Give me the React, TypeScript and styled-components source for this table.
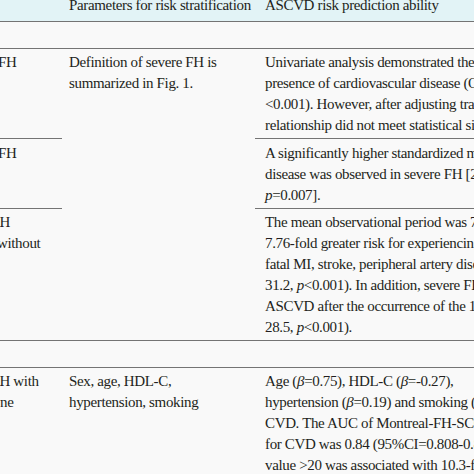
import React from 'react'
import styled, { createGlobalStyle } from 'styled-components'

const GlobalStyle = createGlobalStyle`
  html, body {
    margin: 0;
    padding: 0;
    overflow: hidden;
    background: #f9f9f9;
  }
  body {
    width: 474px;
    height: 474px;
  }
`

const rule = '1px solid #747474'

const Table = styled.div`
  display: grid;
  grid-template-columns: 62px 193px 330px;
  width: 585px;
  margin-top: -9px;
  font-family: 'Liberation Serif', 'Times New Roman', serif;
  font-size: 15px;
  line-height: 21px;
  letter-spacing: -0.35px;
  color: #231f20;
`

const HeadCell = styled.div<{ $pad: number }>`
  background: #e2f3f6;
  padding: 4px 0 5px ${({ $pad }) => $pad}px;
  border-bottom: ${rule};
  white-space: nowrap;
`

const SectionRow = styled.div`
  grid-column: 1 / -1;
  height: 25.5px;
  border-bottom: ${rule};
`

const Cell = styled.div<{ $pad: number; $rows?: number }>`
  grid-row: span ${({ $rows }) => $rows ?? 1};
  padding: 3.5px 0 2px ${({ $pad }) => $pad}px;
  border-bottom: ${rule};
  white-space: nowrap;
  overflow: hidden;
`

const Line = styled.div<{ $shift?: number }>`
  margin-left: ${({ $shift }) => $shift ?? 0}px;
`

const Var = styled.i`
  font-style: italic;
`

type StubLine = [text: string, shift: number]

const Stub = ({ lines }: { lines: StubLine[] }) => (
  <Cell $pad={0}>
    {lines.map(([text, shift]) => (
      <Line $shift={shift} key={text}>
        {text}
      </Line>
    ))}
  </Cell>
)

const Text = ({
  lines,
  pad,
  rows,
}: {
  lines: React.ReactNode[]
  pad: number
  rows?: number
}) => (
  <Cell $pad={pad} $rows={rows}>
    {lines.map((line, i) => (
      <Line key={i}>{line}</Line>
    ))}
  </Cell>
)

const p = <Var>p</Var>
const beta = <Var>β</Var>

export default function App() {
  return (
    <>
      <GlobalStyle />
      <Table role="table">
        <HeadCell $pad={0} />
        <HeadCell $pad={7}>Parameters for risk stratification</HeadCell>
        <HeadCell $pad={10}>ASCVD risk prediction ability</HeadCell>

        <SectionRow />

        <Stub lines={[['FH', -2]]} />
        <Text
          pad={7}
          rows={3}
          lines={['Definition of severe FH is', 'summarized in Fig. 1.']}
        />
        <Text
          pad={10}
          lines={[
            'Univariate analysis demonstrated the association with the',
            'presence of cardiovascular disease (OR=1.9, p=0.02, 95%CI',
            '<0.001). However, after adjusting traditional risk factors, the',
            'relationship did not meet statistical significance.',
          ]}
        />

        <Stub lines={[['FH', -2]]} />
        <Text
          pad={10}
          lines={[
            'A significantly higher standardized mortality ratio for coronary',
            'disease was observed in severe FH [22.5 (95%CI=1.2-31.7),',
            <>{p}=0.007].</>,
          ]}
        />

        <Stub
          lines={[
            ['FH', -8.5],
            ['without', -3],
          ]}
        />
        <Text
          pad={10}
          lines={[
            'The mean observational period was 7.3 years. Severe FH had a',
            '7.76-fold greater risk for experiencing ASCVD (CHD death, non-',
            'fatal MI, stroke, peripheral artery disease) (95%CI=1.93-',
            <>31.2, {p}&lt;0.001). In addition, severe FH had a higher risk of</>,
            'ASCVD after the occurrence of the 1st event (HR=9.42, 95%CI=3.1-',
            <>28.5, {p}&lt;0.001).</>,
          ]}
        />

        <SectionRow />

        <Stub
          lines={[
            ['FH with', -8.5],
            ['ne', 0],
          ]}
        />
        <Text pad={7} lines={['Sex, age, HDL-C,', 'hypertension, smoking']} />
        <Text
          pad={10}
          lines={[
            <>Age ({beta}=0.75), HDL-C ({beta}=-0.27),</>,
            <>hypertension ({beta}=0.19) and smoking ({beta}=0.17) predicted</>,
            'CVD. The AUC of Montreal-FH-SCORE',
            'for CVD was 0.84 (95%CI=0.808-0.872). A score',
            'value >20 was associated with 10.3-fold risk',
          ]}
        />
      </Table>
    </>
  )
}
